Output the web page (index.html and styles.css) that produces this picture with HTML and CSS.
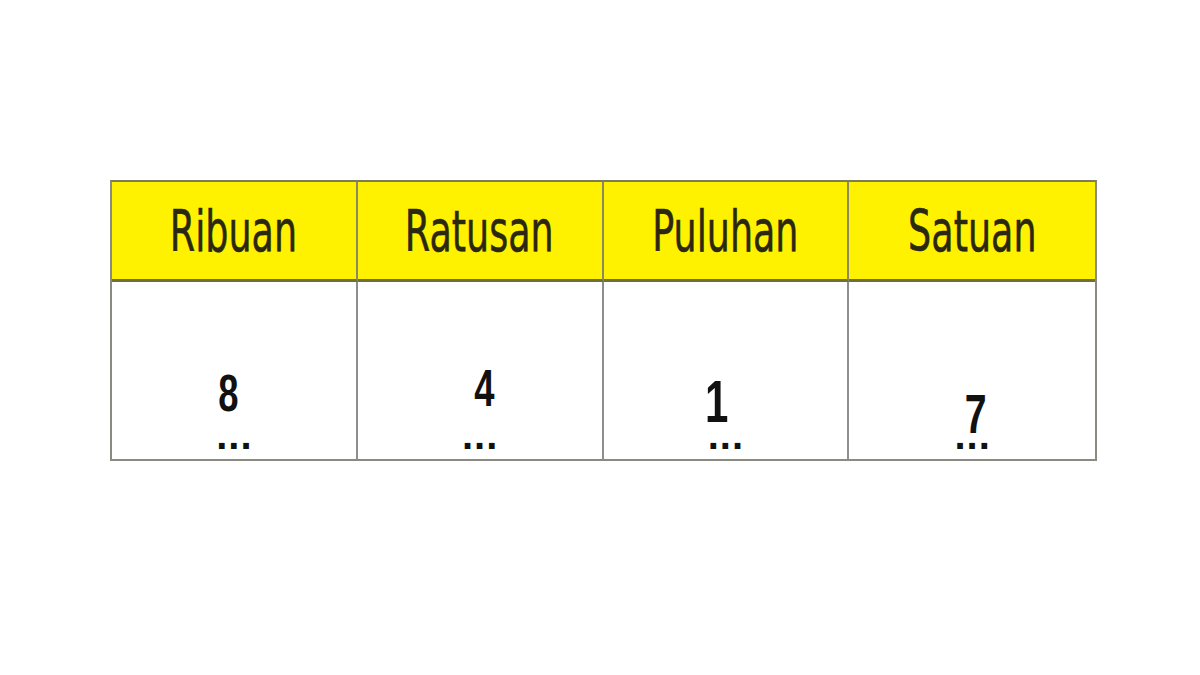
FILE: index.html
```html
<!DOCTYPE html>
<html lang="id">
<head>
<meta charset="utf-8">
<title>Nilai Tempat</title>
<link rel="stylesheet" href="styles.css">
</head>
<body>
<div class="page">
  <div class="table">
    <div class="head"><span class="label">Ribuan</span></div>
    <div class="head"><span class="label">Ratusan</span></div>
    <div class="head"><span class="label">Puluhan</span></div>
    <div class="head last"><span class="label">Satuan</span></div>
    <div class="cell c1"><span class="num">8</span><span class="dots">...</span></div>
    <div class="cell c2"><span class="num">4</span><span class="dots">...</span></div>
    <div class="cell c3"><span class="num">1</span><span class="dots">...</span></div>
    <div class="cell c4 last"><span class="num">7</span><span class="dots">...</span></div>
  </div>
</div>
</body>
</html>
```
FILE: styles.css
```css
html, body {
  margin: 0;
  padding: 0;
  background: #ffffff;
}
.page {
  width: 1200px;
  height: 675px;
  padding: 180px 0 0 110px;
  box-sizing: border-box;
}
.table {
  width: 987px;
  display: grid;
  grid-template-columns: repeat(4, 1fr);
  grid-template-rows: 100px 177px;
  border: 2px solid #8a8a80;
  border-top-color: #7c7c58;
  box-sizing: border-box;
}
.head {
  background: #fff200;
  border-right: 2px solid #8a8a60;
  border-bottom: 3px solid #6f6f3a;
  display: flex;
  align-items: center;
  justify-content: center;
  font-family: "DejaVu Sans", sans-serif;
  font-size: 57px;
  color: #2a2810;
}
.label {
  display: inline-block;
  transform: scaleX(0.64);
  line-height: 1;
  margin-top: 2px;
  -webkit-text-stroke: 0.6px #2a2810;
}
.cell {
  background: #ffffff;
  border-right: 2px solid #8e8e8e;
  display: flex;
  flex-direction: column;
  align-items: center;
  justify-content: flex-end;
  padding-bottom: 14px;
  font-family: "Liberation Sans", Arial, sans-serif;
  font-weight: bold;
  color: #111111;
}
.last {
  border-right: none;
}
.num {
  display: inline-block;
  font-size: 52px;
  line-height: 1;
  transform: scaleX(0.7);
}
.dots {
  font-size: 40px;
  line-height: 20px;
  height: 20px;
  letter-spacing: 1px;
  padding-left: 1px;
}
.c1 .num { margin-bottom: 6px; margin-right: 10px; }
.c2 .num { margin-bottom: 11px; margin-left: 10px; }
.c3 .num { font-size: 60px; margin-bottom: -7px; margin-right: 18px; }
.c4 .num { font-size: 56px; margin-bottom: -17px; margin-left: 6px; }
```
